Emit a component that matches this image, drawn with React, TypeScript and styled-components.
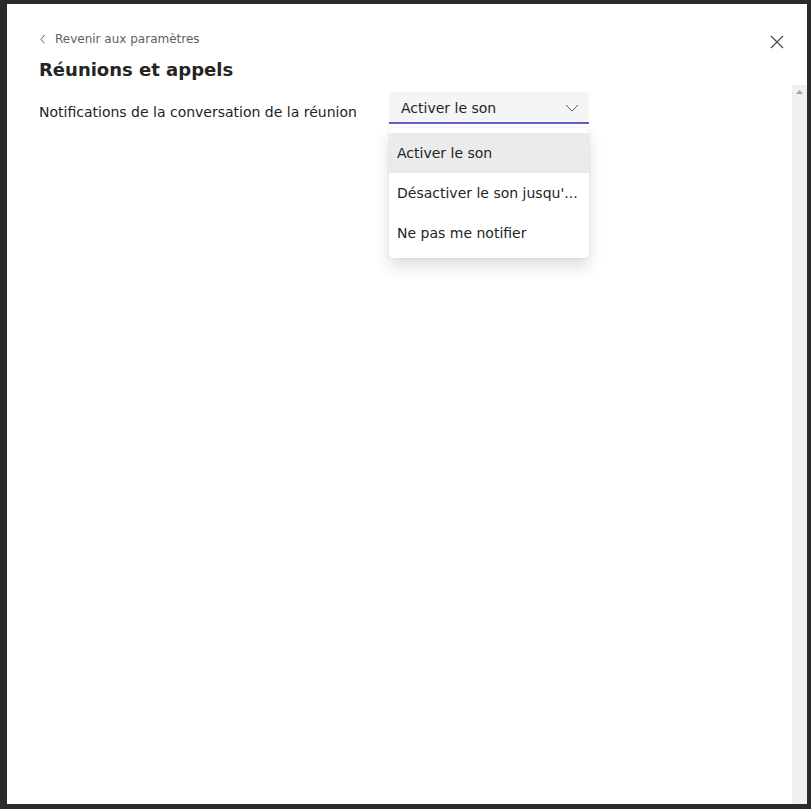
import styled, { createGlobalStyle } from 'styled-components'

const GlobalStyle = createGlobalStyle`
    html, body {
        margin: 0;
        padding: 0;
        background: #2b2b2b;
        height: 100%;
    }
    body {
        font-family: "DejaVu Sans", "Liberation Sans", sans-serif;
        color: #242424;
    }
`;

const Backdrop = styled.div`
    box-sizing: border-box;
    width: 811px;
    height: 809px;
    padding: 4px 4px 5px 7px;
    display: flex;
`;

const Dialog = styled.div`
    flex: 1;
    background: #ffffff;
    display: flex;
    flex-direction: column;
    overflow: hidden;
`;

const Header = styled.div`
    display: flex;
    justify-content: space-between;
    align-items: flex-start;
    padding: 27px 22px 0 32px;
`;

const HeaderText = styled.div`
    display: flex;
    flex-direction: column;
`;

const BackLink = styled.button`
    display: flex;
    align-items: center;
    gap: 8px;
    background: none;
    border: none;
    padding: 0;
    font-family: inherit;
    font-size: 12px;
    color: #616161;
    cursor: pointer;
    height: 16px;
`;

const Title = styled.h1`
    margin: 11px 0 0;
    font-size: 18px;
    font-weight: 700;
    line-height: 24px;
    color: #242424;
`;

const CloseButton = styled.button`
    background: none;
    border: none;
    padding: 0;
    margin-top: 3px;
    width: 16px;
    height: 16px;
    display: flex;
    align-items: center;
    justify-content: center;
    cursor: pointer;
`;

const Body = styled.div`
    flex: 1;
    display: flex;
    margin-top: 3px;
    min-height: 0;
`;

const Content = styled.div`
    flex: 1;
    padding: 7px 0 0 32px;
`;

const SettingRow = styled.div`
    display: flex;
    align-items: flex-start;
`;

const Label = styled.span`
    width: 350px;
    font-size: 14px;
    line-height: 20px;
    padding-top: 10px;
    color: #242424;
`;

const Dropdown = styled.div`
    position: relative;
    width: 200px;
`;

const Trigger = styled.div`
    box-sizing: border-box;
    height: 32px;
    background: #f5f5f5;
    border-radius: 4px 4px 0 0;
    border-bottom: 2px solid #5b5fc7;
    display: flex;
    align-items: center;
    justify-content: space-between;
    padding: 2px 10px 0 12px;
    font-size: 14px;
    color: #242424;
`;

const Menu = styled.ul`
    position: absolute;
    top: 36px;
    left: 0;
    width: 200px;
    box-sizing: border-box;
    margin: 0;
    padding: 5px 0 5px;
    list-style: none;
    background: #ffffff;
    border-radius: 4px;
    box-shadow: 0 0 2px rgba(0, 0, 0, 0.12), 0 8px 16px rgba(0, 0, 0, 0.14);
`;

const MenuItem = styled.li<{ $active?: boolean }>`
    height: 40px;
    padding: 0 8px;
    font-size: 14px;
    line-height: 40px;
    color: #242424;
    background: ${p => (p.$active ? '#ebebeb' : 'transparent')};
    white-space: nowrap;
`;

const Scrollbar = styled.div`
    width: 15px;
    background: #f0f0f0;
    display: flex;
    justify-content: center;
    padding-top: 5px;
`;

const options = ['Activer le son', "Désactiver le son jusqu'...", 'Ne pas me notifier'];

export default function App() {
    return (
        <>
            <GlobalStyle />
            <Backdrop>
                <Dialog>
                    <Header>
                        <HeaderText>
                            <BackLink>
                                <svg width="8" height="12" viewBox="0 0 8 12">
                                    <path d="M5.5 2 L2 6.5 L5.5 10.5" fill="none" stroke="#616161" strokeWidth="1" />
                                </svg>
                                Revenir aux paramètres
                            </BackLink>
                            <Title>Réunions et appels</Title>
                        </HeaderText>
                        <CloseButton aria-label="Fermer">
                            <svg width="14" height="14" viewBox="0 0 14 14">
                                <path d="M1 1 L13 13 M13 1 L1 13" stroke="#424242" strokeWidth="1.1" />
                            </svg>
                        </CloseButton>
                    </Header>
                    <Body>
                        <Content>
                            <SettingRow>
                                <Label>Notifications de la conversation de la réunion</Label>
                                <Dropdown>
                                    <Trigger>
                                        <span>Activer le son</span>
                                        <svg width="14" height="8" viewBox="0 0 14 8">
                                            <path d="M1 1 L7 7 L13 1" fill="none" stroke="#616161" strokeWidth="1" />
                                        </svg>
                                    </Trigger>
                                    <Menu>
                                        {options.map((o, i) => (
                                            <MenuItem key={o} $active={i === 0}>
                                                {o}
                                            </MenuItem>
                                        ))}
                                    </Menu>
                                </Dropdown>
                            </SettingRow>
                        </Content>
                        <Scrollbar>
                            <svg width="7" height="4" viewBox="0 0 7 4">
                                <path d="M0 4 L3.5 0 L7 4 Z" fill="#a3a3a3" />
                            </svg>
                        </Scrollbar>
                    </Body>
                </Dialog>
            </Backdrop>
        </>
    )
}
